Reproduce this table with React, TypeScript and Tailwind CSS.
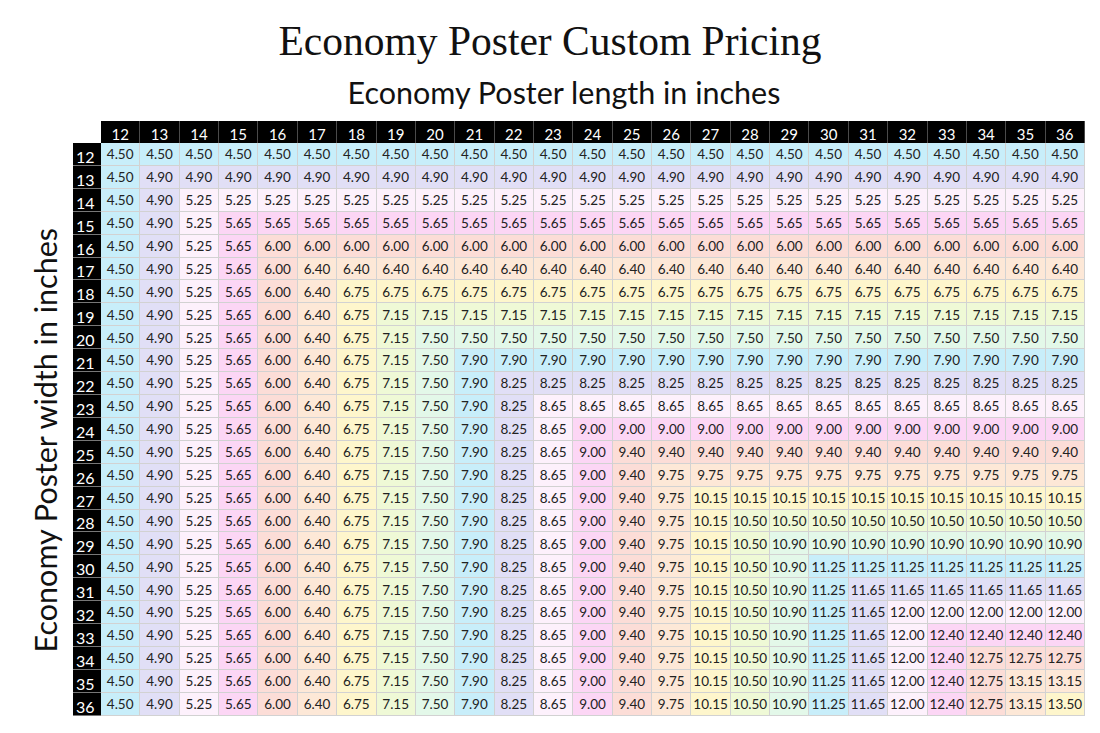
import React from 'react';

const sizes = Array.from({ length: 25 }, (_, i) => i + 12);

const prices = [
  '4.50', '4.90', '5.25', '5.65', '6.00', '6.40', '6.75', '7.15', '7.50', '7.90',
  '8.25', '8.65', '9.00', '9.40', '9.75', '10.15', '10.50', '10.90', '11.25', '11.65',
  '12.00', '12.40', '12.75', '13.15', '13.50',
];

// pastel band colours, repeating every 9 sizes
const bands = [
  'bg-[#c8eefa]',
  'bg-[#e1dff6]',
  'bg-[#fdf1fc]',
  'bg-[#fcd6f5]',
  'bg-[#fcddd7]',
  'bg-[#fde8d7]',
  'bg-[#fef6cc]',
  'bg-[#eff9d6]',
  'bg-[#e3f8e9]',
];

export default function App() {
  return (
    <div className="w-[1100px] h-[733px] bg-white overflow-hidden">
      {/* Titles */}
      <div className="flex flex-col items-center pt-[16px]">
        <h1 className="text-[41.5px] leading-[50px] text-[#111] font-['Liberation_Serif',serif]">
          Economy Poster Custom Pricing
        </h1>
        <h2 className="mt-[8px] ml-[28px] text-[30.5px] leading-[36px] text-[#111] font-['Lato',sans-serif]">
          Economy Poster length in inches
        </h2>
      </div>

      <div className="flex mt-[11px]">
        {/* Vertical axis label */}
        <div className="w-[73px] flex items-center justify-end pr-[13px] pt-[44px]">
          <span className="[writing-mode:vertical-rl] rotate-180 text-[30.5px] leading-none text-[#111] font-['Lato',sans-serif] whitespace-nowrap">
            Economy Poster width in inches
          </span>
        </div>

        {/* Price grid */}
        <div className="grid w-[1012px] grid-cols-[28px_repeat(25,1fr)] grid-rows-[22px_repeat(25,22.92px)] font-['Lato',sans-serif]">
          <div className="bg-white" />
          {sizes.map((c) => (
            <div
              key={`h${c}`}
              className="bg-black text-white text-[15px] leading-none flex items-end justify-center pb-[1px] border-r border-[#4a4a4a] last:border-r-0"
            >
              {c}
            </div>
          ))}

          {sizes.map((r, ri) => (
            <React.Fragment key={`r${r}`}>
              <div className="bg-black text-white text-[16px] leading-[17px] flex items-end pl-[3px] border-b border-[#777]">
                {r}
              </div>
              {sizes.map((c, ci) => {
                const m = Math.min(ri, ci);
                return (
                  <div
                    key={`${r}-${c}`}
                    className={`${bands[m % 9]} flex items-center justify-center pt-[1px] text-[13.5px] text-[#222] border-r border-b border-[#d2d2d2]`}
                  >
                    {prices[m]}
                  </div>
                );
              })}
            </React.Fragment>
          ))}
        </div>
      </div>
    </div>
  );
}
